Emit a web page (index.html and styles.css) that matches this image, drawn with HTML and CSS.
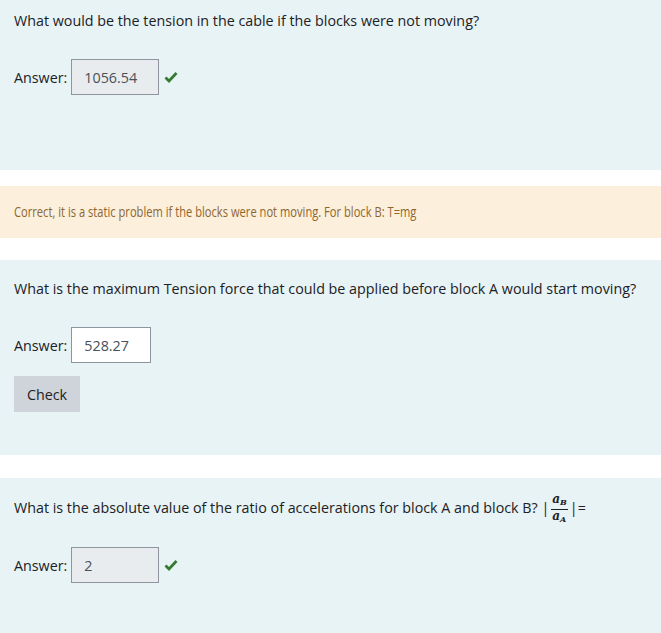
FILE: index.html
```html
<!DOCTYPE html>
<html lang="en">
<head>
    <meta charset="UTF-8">
    <meta name="viewport" content="width=device-width, initial-scale=1.0">
    <title>Quiz</title>
    <link rel="stylesheet" href="styles.css">
</head>
<body>

    <div class="que first">
        <p class="qtext">What would be the tension in the cable if the blocks were not moving?</p>
        <div class="answer">
            <label>Answer:</label>
            <input class="readonly wide" type="text" value="1056.54" readonly>
            <svg class="tick" viewBox="0 0 14 12" width="14" height="12"><path d="M1.5 6.5 L5 10 L12.5 2" fill="none" stroke="#357a32" stroke-width="2.8"/></svg>
        </div>
    </div>

    <div class="feedback"><span>Correct, it is a static problem if the blocks were not moving. For block B: T=mg</span></div>

    <div class="que">
        <p class="qtext">What is the maximum Tension force that could be applied before block A would start moving?</p>
        <div class="answer">
            <label>Answer:</label>
            <input type="text" value="528.27">
        </div>
        <button class="check">Check</button>
    </div>

    <div class="que last">
        <p class="qtext">What is the absolute value of the ratio of accelerations for block A and block B? |<span class="frac"><span class="num">a<sub>B</sub></span><span class="den">a<sub>A</sub></span></span>|=</p>
        <div class="answer">
            <label>Answer:</label>
            <input class="readonly wide" type="text" value="2" readonly>
            <svg class="tick" viewBox="0 0 14 12" width="14" height="12"><path d="M1.5 6.5 L5 10 L12.5 2" fill="none" stroke="#357a32" stroke-width="2.8"/></svg>
        </div>
    </div>

</body>
</html>
```

FILE: styles.css
```css
body {
    font-family: "Open Sans", "Noto Sans", sans-serif;
    font-size: 14.3px;
    color: #1d2125;
    margin: 0;
    padding: 0;
    background: #fff;
}
.que {
    background-color: #e7f3f5;
    padding: 18px 14px 43px;
    margin-bottom: 23px;
}
.que.first {
    padding-top: 10px;
    padding-bottom: 75px;
    margin-bottom: 16px;
}
.que.last {
    margin-bottom: 0;
    padding-top: 16px;
    padding-bottom: 60px;
}
.qtext {
    margin: 0 0 27px;
    line-height: 22px;
}
.que.last .qtext {
    margin-bottom: 22px;
}
.answer {
    display: flex;
    align-items: center;
}
.answer label {
    margin-right: 4px;
}
.answer input {
    width: 80px;
    height: 36px;
    box-sizing: border-box;
    border: 1px solid #8f959e;
    background: #fff;
    padding: 0 12px;
    font-family: inherit;
    font-size: 14.3px;
    color: #495057;
}
.answer input.wide {
    width: 88px;
}
.answer input.readonly {
    background: #e9ecef;
}
.tick {
    margin-left: 5px;
}
.check {
    margin-top: 13px;
    width: 66px;
    height: 36px;
    border: none;
    background: #ced4da;
    color: #1d2125;
    font-family: inherit;
    font-size: 14.3px;
}
.feedback {
    background-color: #fcefdc;
    color: #8e662e;
    padding: 15px 14px;
    line-height: 22px;
    margin-bottom: 22px;
    white-space: nowrap;
}
.feedback span {
    display: inline-block;
    transform: scale(0.78, 1.05);
    transform-origin: left center;
}
.frac {
    display: inline-flex;
    flex-direction: column;
    vertical-align: middle;
    font-family: "DejaVu Serif", serif;
    font-style: italic;
    font-weight: bold;
    font-size: 12px;
    line-height: 11px;
    margin: 0 2px;
}
.frac .num {
    border-bottom: 1px solid #1d2125;
    padding: 0 1px 1px;
}
.frac .den {
    padding: 1px 1px 0;
}
.frac sub {
    font-size: 8px;
    vertical-align: -2px;
}
```
